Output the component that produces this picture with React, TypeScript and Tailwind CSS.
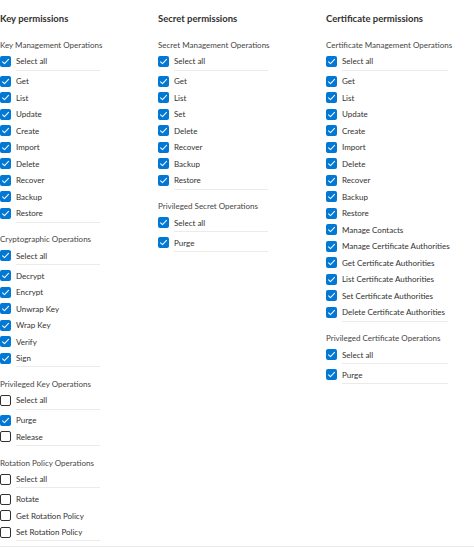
import React from "react";

type Group = {
  label: string;
  selectAll: boolean;
  items: { name: string; checked: boolean }[];
};

type Column = {
  title: string;
  width: string;
  groups: Group[];
};

const on = (names: string[]) => names.map((name) => ({ name, checked: true }));
const off = (names: string[]) => names.map((name) => ({ name, checked: false }));

const columns: Column[] = [
  {
    title: "Key permissions",
    width: "w-[100px]",
    groups: [
      {
        label: "Key Management Operations",
        selectAll: true,
        items: on(["Get", "List", "Update", "Create", "Import", "Delete", "Recover", "Backup", "Restore"]),
      },
      {
        label: "Cryptographic Operations",
        selectAll: true,
        items: on(["Decrypt", "Encrypt", "Unwrap Key", "Wrap Key", "Verify", "Sign"]),
      },
      {
        label: "Privileged Key Operations",
        selectAll: false,
        items: [
          { name: "Purge", checked: true },
          { name: "Release", checked: false },
        ],
      },
      {
        label: "Rotation Policy Operations",
        selectAll: false,
        items: off(["Rotate", "Get Rotation Policy", "Set Rotation Policy"]),
      },
    ],
  },
  {
    title: "Secret permissions",
    width: "w-[110px]",
    groups: [
      {
        label: "Secret Management Operations",
        selectAll: true,
        items: on(["Get", "List", "Set", "Delete", "Recover", "Backup", "Restore"]),
      },
      {
        label: "Privileged Secret Operations",
        selectAll: true,
        items: on(["Purge"]),
      },
    ],
  },
  {
    title: "Certificate permissions",
    width: "w-[122px]",
    groups: [
      {
        label: "Certificate Management Operations",
        selectAll: true,
        items: on([
          "Get",
          "List",
          "Update",
          "Create",
          "Import",
          "Delete",
          "Recover",
          "Backup",
          "Restore",
          "Manage Contacts",
          "Manage Certificate Authorities",
          "Get Certificate Authorities",
          "List Certificate Authorities",
          "Set Certificate Authorities",
          "Delete Certificate Authorities",
        ]),
      },
      {
        label: "Privileged Certificate Operations",
        selectAll: true,
        items: on(["Purge"]),
      },
    ],
  },
];

function Box({ checked }: { checked: boolean }) {
  if (!checked) {
    return <span className="w-[11px] h-[11px] shrink-0 rounded-[2px] border border-[#323130] bg-white" />;
  }
  return (
    <span className="w-[11px] h-[11px] shrink-0 rounded-[2px] bg-[#0078d4] flex items-center justify-center">
      <svg viewBox="0 0 12 12" className="w-[11px] h-[11px]">
        <path d="M2.8 6.3 L4.9 8.3 L9.3 3.7" fill="none" stroke="#fff" strokeWidth="1.1" strokeLinecap="round" strokeLinejoin="round" />
      </svg>
    </span>
  );
}

function Row({ name, checked }: { name: string; checked: boolean }) {
  return (
    <div className="h-[16.5px] flex items-center">
      <Box checked={checked} />
      <span className="ml-[5px] whitespace-nowrap text-[8px] text-[#323130] leading-none">{name}</span>
    </div>
  );
}

function PermissionGroup({ group }: { group: Group }) {
  return (
    <div className="flex flex-col">
      <div className="h-[16px] flex items-center whitespace-nowrap text-[8px] text-[#484644] leading-none">
        {group.label}
      </div>
      <Row name="Select all" checked={group.selectAll} />
      <div className="ml-[16px] border-b border-[#edebe9]" />
      <div className="pt-[2.5px] flex flex-col">
        {group.items.map((item) => (
          <Row key={item.name} name={item.name} checked={item.checked} />
        ))}
      </div>
      <div className="ml-[16px] border-b border-[#edebe9]" />
    </div>
  );
}

export default function App() {
  return (
    <div className="w-[474px] h-[549px] bg-white font-['Lato',sans-serif]">
      <div className="grid grid-cols-[158px_168px_1fr] pb-[5px] border-b border-[#edebe9]">
        {columns.map((col) => (
          <div key={col.title} className={`${col.width} flex flex-col`}>
            <div className="h-[14px] mt-[12px] mb-[11px] flex items-center whitespace-nowrap text-[9.5px] font-bold text-[#323130] leading-none">
              {col.title}
            </div>
            <div className="flex flex-col gap-[8.75px]">
              {col.groups.map((g) => (
                <PermissionGroup key={g.label} group={g} />
              ))}
            </div>
          </div>
        ))}
      </div>
    </div>
  );
}
